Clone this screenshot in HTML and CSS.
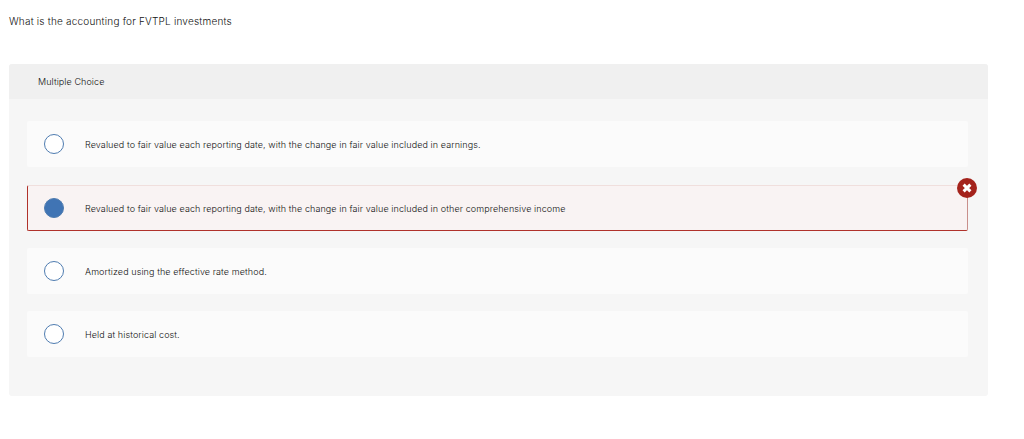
FILE: index.html
```html
<!DOCTYPE html>
<html lang="en">
<head>
  <meta charset="UTF-8" />
  <meta name="viewport" content="width=device-width, initial-scale=1.0"/>
  <title>Multiple Choice</title>
  <link rel="stylesheet" href="styles.css">
</head>
<body>

  <p class="question">What is the accounting for FVTPL investments</p>

  <div class="panel">
    <div class="panel-header">Multiple Choice</div>

    <div class="options">
      <div class="option">
        <span class="radio"></span>
        <span>Revalued to fair value each reporting date, with the change in fair value included in earnings.</span>
      </div>

      <div class="option wrong">
        <span class="radio checked"></span>
        <span>Revalued to fair value each reporting date, with the change in fair value included in other comprehensive income</span>
        <svg class="wrong-badge" width="20" height="20" viewBox="0 0 20 20" aria-hidden="true">
          <circle cx="10" cy="10" r="10" fill="#a4231c"/>
          <path d="M6.6 6.6 L13.4 13.4 M13.4 6.6 L6.6 13.4" stroke="#fff" stroke-width="3"/>
        </svg>
      </div>

      <div class="option">
        <span class="radio"></span>
        <span>Amortized using the effective rate method.</span>
      </div>

      <div class="option">
        <span class="radio"></span>
        <span>Held at historical cost.</span>
      </div>
    </div>
  </div>

</body>
</html>
```

FILE: styles.css
```css
body {
  margin: 0;
  padding: 15px 36px 0 9px;
  font-family: 'Inter', sans-serif;
  font-weight: 300;
  background-color: white;
  color: #111;
}

.question {
  margin: 0 0 37px;
  font-size: 10px;
  line-height: 12px;
  letter-spacing: 0.2px;
}

.panel {
  height: 332px;
  background-color: #f6f6f6;
  border-radius: 3px;
}

.panel-header {
  height: 35px;
  padding-left: 29px;
  background-color: #f0f0f0;
  border-radius: 3px 3px 0 0;
  font-size: 9px;
  line-height: 35px;
  letter-spacing: 0.08px;
}

.options {
  display: flex;
  flex-direction: column;
  gap: 17px;
  padding: 22px 20px 0 18px;
}

.option {
  position: relative;
  display: flex;
  align-items: center;
  gap: 21px;
  height: 46px;
  padding-left: 17px;
  background-color: #fbfbfb;
  border-radius: 2px;
  font-size: 9px;
  letter-spacing: 0.095px;
}

.wrong {
  margin-top: 1px;
  background-color: #f9f3f3;
  border-top: 1px solid #f0dfdd;
  border-right: 1px solid #c98f8b;
  border-left: 1px solid #b0322b;
  border-bottom: 1px solid #b0322b;
  padding-left: 16px;
  height: 44px;
}

.radio {
  flex: none;
  box-sizing: border-box;
  width: 20px;
  height: 20px;
  background-color: white;
  border: 1px solid #4f7cb0;
  border-radius: 50%;
}

.checked {
  background-color: #4074b4;
}

.wrong-badge {
  position: absolute;
  top: -8px;
  right: -10px;
}
```
